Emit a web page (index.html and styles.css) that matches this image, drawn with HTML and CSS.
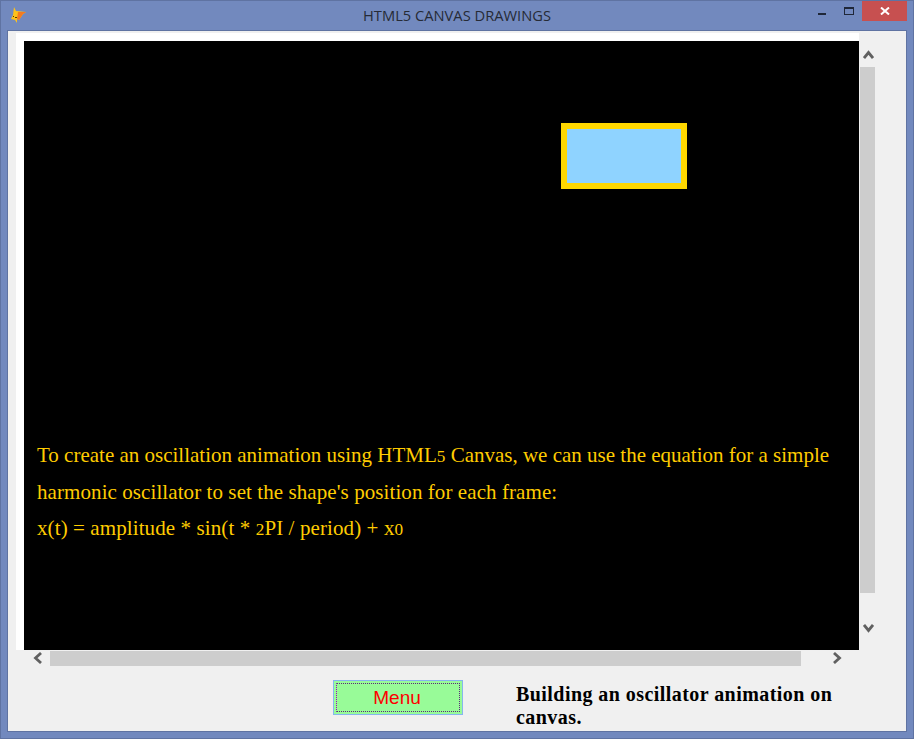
FILE: index.html
```html
<!DOCTYPE html>
<html lang="en">
<head>
<meta charset="utf-8">
<title>HTML5 CANVAS DRAWINGS</title>
<link rel="stylesheet" href="styles.css">
</head>
<body>
<div class="window">
  <header class="titlebar">
    <svg class="app-icon" width="16" height="16" viewBox="0 0 16 16">
      <polygon points="3,0 5,4 15,5 12,7 8,13 6,12 6,16 4,13 0,12 2,8" fill="#ffc21a"/>
      <polygon points="7,5 15,5 12,7 8,13 6,12" fill="#f5791f"/>
      <rect x="4" y="10" width="2" height="1" fill="#5a3a00"/>
      <rect x="2" y="9" width="1" height="1" fill="#5a3a00"/>
    </svg>
    <div class="title">HTML5 CANVAS DRAWINGS</div>
    <div class="controls">
      <span class="minimize"></span>
      <span class="maximize"></span>
      <span class="close">
        <svg width="10" height="8" viewBox="0 0 10 8"><path d="M1 0.5 L9 7.5 M9 0.5 L1 7.5" stroke="#fff" stroke-width="2" fill="none"/></svg>
      </span>
    </div>
  </header>
  <main class="client">
    <div class="browser">
      <div class="viewport">
        <div class="canvas">
          <div class="shape"></div>
          <p class="line first">To create an oscillation animation using HTML<span class="old">5</span> Canvas, we can use the equation for a simple</p>
          <p class="line second">harmonic oscillator to set the shape's position for each frame:</p>
          <p class="line third">x(t) = amplitude * sin(t * <span class="old">2</span>PI / period) + x<span class="old">0</span></p>
        </div>
      </div>
      <div class="vscroll">
        <svg class="arrow up" width="11" height="9" viewBox="0 0 11 9"><path d="M1 8 L5.5 2.5 L10 8" stroke="#606060" stroke-width="2.8" fill="none"/></svg>
        <div class="vthumb"></div>
        <svg class="arrow down" width="11" height="9" viewBox="0 0 11 9"><path d="M1 1 L5.5 6.5 L10 1" stroke="#606060" stroke-width="2.8" fill="none"/></svg>
      </div>
    </div>
    <div class="hscroll">
      <svg width="9" height="12" viewBox="0 0 9 12"><path d="M8 1 L2.5 6 L8 11" stroke="#606060" stroke-width="2.8" fill="none"/></svg>
      <div class="hthumb"></div>
      <svg width="9" height="12" viewBox="0 0 9 12"><path d="M1 1 L6.5 6 L1 11" stroke="#606060" stroke-width="2.8" fill="none"/></svg>
    </div>
    <footer class="footer">
      <button class="menu" type="button"><span class="menu-focus">Menu</span></button>
      <div class="caption">Building an oscillator animation on canvas.</div>
    </footer>
  </main>
</div>
</body>
</html>
```
FILE: styles.css
```css
* { box-sizing: border-box; }
html, body { margin: 0; padding: 0; }
body { width: 914px; height: 739px; overflow: hidden; background: #7289be; }

.window {
  width: 914px;
  height: 739px;
  display: flex;
  flex-direction: column;
  padding: 0 7px 7px;
  background: #7289be;
  border: 1px solid #5f73a2;
  border-width: 1px 0 0 0;
  box-shadow: inset 1px 0 #5f73a2, inset -1px 0 #5f73a2, inset 0 -1px #5f73a2;
}

.titlebar {
  height: 29px;
  flex: none;
  display: grid;
  grid-template-columns: 1fr auto 1fr;
  align-items: start;
}
.app-icon { margin: 6px 0 0 4px; }
.title {
  font: 14.7px/1 "Open Sans", sans-serif;
  color: #262b36;
  margin-top: 7px;
  white-space: nowrap;
}
.controls { display: flex; justify-content: flex-end; align-items: flex-start; }
.minimize { width: 8px; height: 2px; background: #1f2738; margin: 12px 0 0 0; }
.maximize { width: 10px; height: 8px; border: 1px solid #1f2738; border-top-width: 2px; margin: 6px 8px 0 18px; }
.close { width: 45px; height: 20px; background: #c75050; display: flex; align-items: center; justify-content: center; }

.client {
  flex: 1;
  background: #f0f0f0;
  border: 1px solid #5f73a2;
  display: flex;
  flex-direction: column;
}

.browser { display: flex; height: 619px; padding: 2px 0 0 8px; flex: none; }
.viewport { width: 843px; height: 617px; background: #fff; padding: 8px 0 0 8px; flex: none; }
.canvas {
  position: relative;
  width: 835px;
  height: 609px;
  background: #000;
  padding: 399px 0 0 13px;
  font-family: "Liberation Serif", serif;
  font-size: 21px;
  color: #ffcc00;
}
.shape {
  position: absolute;
  left: 537px;
  top: 82px;
  width: 126px;
  height: 66px;
  border: 6px solid #ffd700;
  background: #8fd3ff;
}
.line { margin: 0; line-height: 30px; white-space: nowrap; }
.second { margin-top: 7px; letter-spacing: 0.08px; margin-top: 5px; }
.third { margin-top: 6px; letter-spacing: 0.1px; }
.old { font-size: 0.82em; }

.vscroll { width: 16px; margin-left: 1px; display: flex; flex-direction: column; align-items: stretch; }
.arrow { display: block; align-self: center; flex: none; }
.up { margin-top: 17px; margin-bottom: 8px; }
.vthumb { height: 526px; background: #cdcdcd; width: 15px; flex: none; }
.down { margin-top: 31px; }

.hscroll {
  height: 16px;
  flex: none;
  display: flex;
  align-items: center;
  padding-left: 25px;
}
.hthumb { width: 751px; height: 15px; background: #cdcdcd; margin: 1px 32px 0 8px; align-self: flex-start; }

.footer { display: flex; flex: 1; align-items: flex-start; padding: 14px 0 0 325px; }
.menu {
  width: 130px;
  height: 35px;
  background: #98fb98;
  border: 1px solid #86b6ee;
  padding: 2px;
  font: 19px "Liberation Sans", sans-serif;
  color: #ff0000;
  display: flex;
  flex: none;
}
.menu-focus {
  flex: 1;
  border: 1px dotted #5a2a7a;
  border-left-color: #a000c0;
  display: flex;
  align-items: center;
  justify-content: center;
  padding-right: 2px;
}
.caption {
  margin: 3px 0 0 53px;
  width: 330px;
  font: bold 20px/23px "Liberation Serif", serif;
  letter-spacing: 0.44px;
  color: #000;
}
```
